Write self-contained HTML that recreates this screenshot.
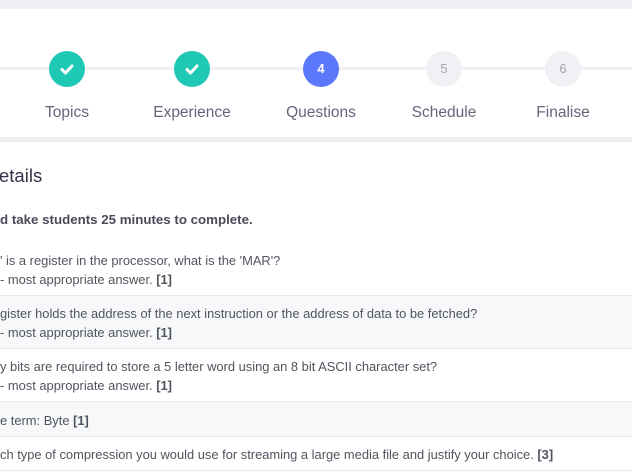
<!DOCTYPE html>
<html><head><meta charset="utf-8"><style>
*{margin:0;padding:0;box-sizing:border-box}
body{width:632px;height:475px;overflow:hidden;background:#fff;font-family:"Liberation Sans",sans-serif;position:relative}
.top{position:absolute;left:0;top:0;width:632px;height:9px;background:#efeff5}
.sep{position:absolute;left:0;top:137px;width:632px;height:5px;background:#ececf1}
.line{position:absolute;left:0;top:67px;width:632px;height:3px;background:#f1f1f4}
.c{position:absolute;top:51px;width:36px;height:36px;border-radius:50%;text-align:center;line-height:36px;font-size:13px;font-weight:bold}
.g{background:#1fc8b5}
.b{background:#5b78fb;color:#fff}
.n{background:#f1f1f5;color:#a3a3b3;font-weight:normal}
.lb{position:absolute;top:104px;font-size:15.5px;color:#65657a;transform:translateX(-50%);white-space:nowrap}
.t{position:absolute;white-space:nowrap;color:#50545f;font-size:12.9px}
.row{position:absolute;left:0;width:632px;border-top:1px solid #e9e9ee}
.gr{background:#f7f8fa}
</style></head><body>
<div class="top"></div>
<div class="line"></div>
<div class="c g" style="left:49px"><svg width="36" height="36" viewBox="0 0 36 36"><path d="M13 18.5l3.5 3.5 6.5-7" stroke="#fff" stroke-width="3" fill="none" stroke-linecap="round" stroke-linejoin="round"/></svg></div>
<div class="c g" style="left:174px"><svg width="36" height="36" viewBox="0 0 36 36"><path d="M13 18.5l3.5 3.5 6.5-7" stroke="#fff" stroke-width="3" fill="none" stroke-linecap="round" stroke-linejoin="round"/></svg></div>
<div class="c b" style="left:303px">4</div>
<div class="c n" style="left:426px">5</div>
<div class="c n" style="left:545px">6</div>
<div class="lb" style="left:67px">Topics</div>
<div class="lb" style="left:192px">Experience</div>
<div class="lb" style="left:321px">Questions</div>
<div class="lb" style="left:444px">Schedule</div>
<div class="lb" style="left:563px">Finalise</div>
<div class="sep"></div>
<div class="t" style="left:-1px;top:165px;font-size:18.5px;color:#33334a">etails</div>
<div class="t" style="left:0;top:212px;font-size:13.3px;font-weight:bold;color:#4a4a5a">d take students 25 minutes to complete.</div>
<div class="row gr" style="top:295px;height:53px"></div>
<div class="row" style="top:348px;height:53px"></div>
<div class="row gr" style="top:401px;height:35px"></div>
<div class="row" style="top:436px;height:34px"></div>
<div class="row" style="top:470px;height:5px"></div>
<div class="t" style="left:0;top:253px">' is a register in the processor, what is the 'MAR'?</div>
<div class="t" style="left:0;top:272px">- most appropriate answer. <b>[1]</b></div>
<div class="t" style="left:0;top:306px">gister holds the address of the next instruction or the address of data to be fetched?</div>
<div class="t" style="left:0;top:325px">- most appropriate answer. <b>[1]</b></div>
<div class="t" style="left:0;top:359px">y bits are required to store a 5 letter word using an 8 bit ASCII character set?</div>
<div class="t" style="left:0;top:378px">- most appropriate answer. <b>[1]</b></div>
<div class="t" style="left:0;top:413px">e term: Byte <b>[1]</b></div>
<div class="t" style="left:0;top:447px">ch type of compression you would use for streaming a large media file and justify your choice. <b>[3]</b></div>
</body></html>
